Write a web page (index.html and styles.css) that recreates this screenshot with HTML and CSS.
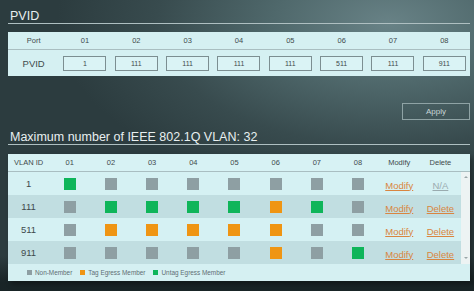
FILE: index.html
```html
<!doctype html>
<html>
    <head>
        <link rel="stylesheet" href="styles.css">
    </head>
    <body>
        <div class="page">
            <h2 class="title">PVID</h2>
            <div class="panel pvid">
                <div class="pvid-row head">
                    <div>Port</div>
                    <div>01</div><div>02</div><div>03</div><div>04</div>
                    <div>05</div><div>06</div><div>07</div><div>08</div>
                </div>
                <div class="pvid-row values">
                    <div class="label">PVID</div>
                    <div><span class="box">1</span></div>
                    <div><span class="box">111</span></div>
                    <div><span class="box">111</span></div>
                    <div><span class="box">111</span></div>
                    <div><span class="box">111</span></div>
                    <div><span class="box">511</span></div>
                    <div><span class="box">111</span></div>
                    <div><span class="box">911</span></div>
                </div>
            </div>

            <div class="actions">
                <button class="apply">Apply</button>
            </div>

            <h2 class="title">Maximum number of IEEE 802.1Q VLAN: 32</h2>
            <div class="panel vlan">
                <div class="vlan-head">
                    <div class="vlan-row">
                        <div>VLAN ID</div>
                        <div>01</div><div>02</div><div>03</div><div>04</div>
                        <div>05</div><div>06</div><div>07</div><div>08</div>
                        <div>Modify</div><div>Delete</div>
                    </div>
                </div>
                <div class="vlan-body">
                    <div class="rows">
                        <div class="vlan-row">
                            <div class="id">1</div>
                            <div><i class="sq u"></i></div>
                            <div><i class="sq n"></i></div>
                            <div><i class="sq n"></i></div>
                            <div><i class="sq n"></i></div>
                            <div><i class="sq n"></i></div>
                            <div><i class="sq n"></i></div>
                            <div><i class="sq n"></i></div>
                            <div><i class="sq n"></i></div>
                            <div><a class="link">Modify</a></div>
                            <div><a class="link off">N/A</a></div>
                        </div>
                        <div class="vlan-row dark">
                            <div class="id">111</div>
                            <div><i class="sq n"></i></div>
                            <div><i class="sq u"></i></div>
                            <div><i class="sq u"></i></div>
                            <div><i class="sq u"></i></div>
                            <div><i class="sq u"></i></div>
                            <div><i class="sq t"></i></div>
                            <div><i class="sq u"></i></div>
                            <div><i class="sq n"></i></div>
                            <div><a class="link">Modify</a></div>
                            <div><a class="link">Delete</a></div>
                        </div>
                        <div class="vlan-row">
                            <div class="id">511</div>
                            <div><i class="sq n"></i></div>
                            <div><i class="sq t"></i></div>
                            <div><i class="sq t"></i></div>
                            <div><i class="sq t"></i></div>
                            <div><i class="sq t"></i></div>
                            <div><i class="sq t"></i></div>
                            <div><i class="sq n"></i></div>
                            <div><i class="sq n"></i></div>
                            <div><a class="link">Modify</a></div>
                            <div><a class="link">Delete</a></div>
                        </div>
                        <div class="vlan-row dark">
                            <div class="id">911</div>
                            <div><i class="sq n"></i></div>
                            <div><i class="sq n"></i></div>
                            <div><i class="sq n"></i></div>
                            <div><i class="sq n"></i></div>
                            <div><i class="sq n"></i></div>
                            <div><i class="sq t"></i></div>
                            <div><i class="sq n"></i></div>
                            <div><i class="sq u"></i></div>
                            <div><a class="link">Modify</a></div>
                            <div><a class="link">Delete</a></div>
                        </div>
                    </div>
                    <div class="scrollbar">
                        <span class="arrow up"></span>
                        <span class="arrow down"></span>
                    </div>
                </div>
                <div class="legend">
                    <span><i class="mini n"></i>Non-Member</span>
                    <span><i class="mini t"></i>Tag Egress Member</span>
                    <span><i class="mini u"></i>Untag Egress Member</span>
                </div>
            </div>
        </div>
    </body>
</html>
```

FILE: styles.css
```css
* {
    margin: 0;
    padding: 0;
    box-sizing: border-box;
}
html,
body {
    width: 474px;
    height: 291px;
    overflow: hidden;
}
body {
    font-family: "Liberation Sans", Arial, sans-serif;
    color: #3f4a4c;
    background:
        linear-gradient(to bottom, rgba(20, 30, 32, 0) 0%, rgba(20, 30, 32, 0) 88%, rgba(20, 30, 32, 0.8) 97%),
        radial-gradient(ellipse 70% 60% at 82% 8%, #688286 0%, #4f686b 35%, #384b4e 70%, #2c3c3f 100%);
}
.page {
    padding: 0 4px 0 8px;
}
.title {
    padding: 9px 0 0 2px;
    font-size: 12.5px;
    line-height: 14px;
    font-weight: normal;
    color: #e8eff0;
    border-bottom: 1px solid #aebfc1;
}
.panel {
    margin-top: 8px;
    background: #d5f0f2;
}

/* pvid */
.pvid-row {
    display: grid;
    grid-template-columns: repeat(9, 1fr);
    align-items: center;
    text-align: center;
}
.pvid-row.head {
    height: 18px;
    font-size: 7.5px;
    border-bottom: 1px solid #a9bec1;
}
.pvid-row.values {
    height: 26px;
}
.pvid-row .label {
    font-size: 9.5px;
}
.box {
    display: block;
    width: 43px;
    height: 15px;
    margin: 0 auto;
    border: 1px solid #7c8e91;
    background: #daf3f5;
    font-size: 7px;
    line-height: 13px;
}

.actions {
    display: flex;
    justify-content: flex-end;
    padding-top: 27px;
}
.apply {
    width: 68px;
    height: 17px;
    background: transparent;
    border: 1px solid #8fa3a5;
    color: #c9d6d7;
    font-family: inherit;
    font-size: 8px;
}
.actions + .title {
    padding-top: 10px;
}

/* vlan table */
.vlan {
    margin-top: 9px;
    box-shadow: 3px 3px 5px rgba(0, 0, 0, 0.35);
}
.vlan-head {
    height: 18px;
    background: #d7f2f4;
    border-bottom: 1px solid #a9bec1;
}
.vlan-head .vlan-row {
    height: 17px;
    font-size: 7.5px;
}
.vlan-row {
    width: 453px;
    display: grid;
    grid-template-columns: repeat(11, 1fr);
    align-items: center;
    text-align: center;
}
.vlan-body {
    display: flex;
}
.rows .vlan-row {
    height: 23px;
    background: #d5f1f3;
}
.rows .vlan-row.dark {
    background: #c1dee1;
}
.id {
    font-size: 9.5px;
}
.sq {
    display: block;
    width: 12px;
    height: 12px;
    margin: 0 auto;
}
.n {
    background: #8e9fa3;
}
.t {
    background: #ef9513;
}
.u {
    background: #0fb55a;
}
.link {
    font-size: 9.5px;
    color: #d98540;
    text-decoration: underline;
}
.link.off {
    color: #9aabaf;
}
.scrollbar {
    width: 9px;
    background: #edf3f3;
    display: flex;
    flex-direction: column;
    justify-content: space-between;
    align-items: center;
    padding: 4px 0 5px;
}
.arrow {
    width: 0;
    height: 0;
    border-left: 2px solid transparent;
    border-right: 2px solid transparent;
}
.arrow.up {
    border-bottom: 2px solid #9aa6a8;
}
.arrow.down {
    border-top: 2px solid #9aa6a8;
}
.legend {
    height: 17px;
    display: flex;
    align-items: center;
    gap: 8px;
    padding-left: 19px;
    font-size: 6.4px;
    color: #5e6e72;
}
.legend span {
    display: flex;
    align-items: center;
}
.mini {
    width: 5px;
    height: 5px;
    margin-right: 3px;
}
```
